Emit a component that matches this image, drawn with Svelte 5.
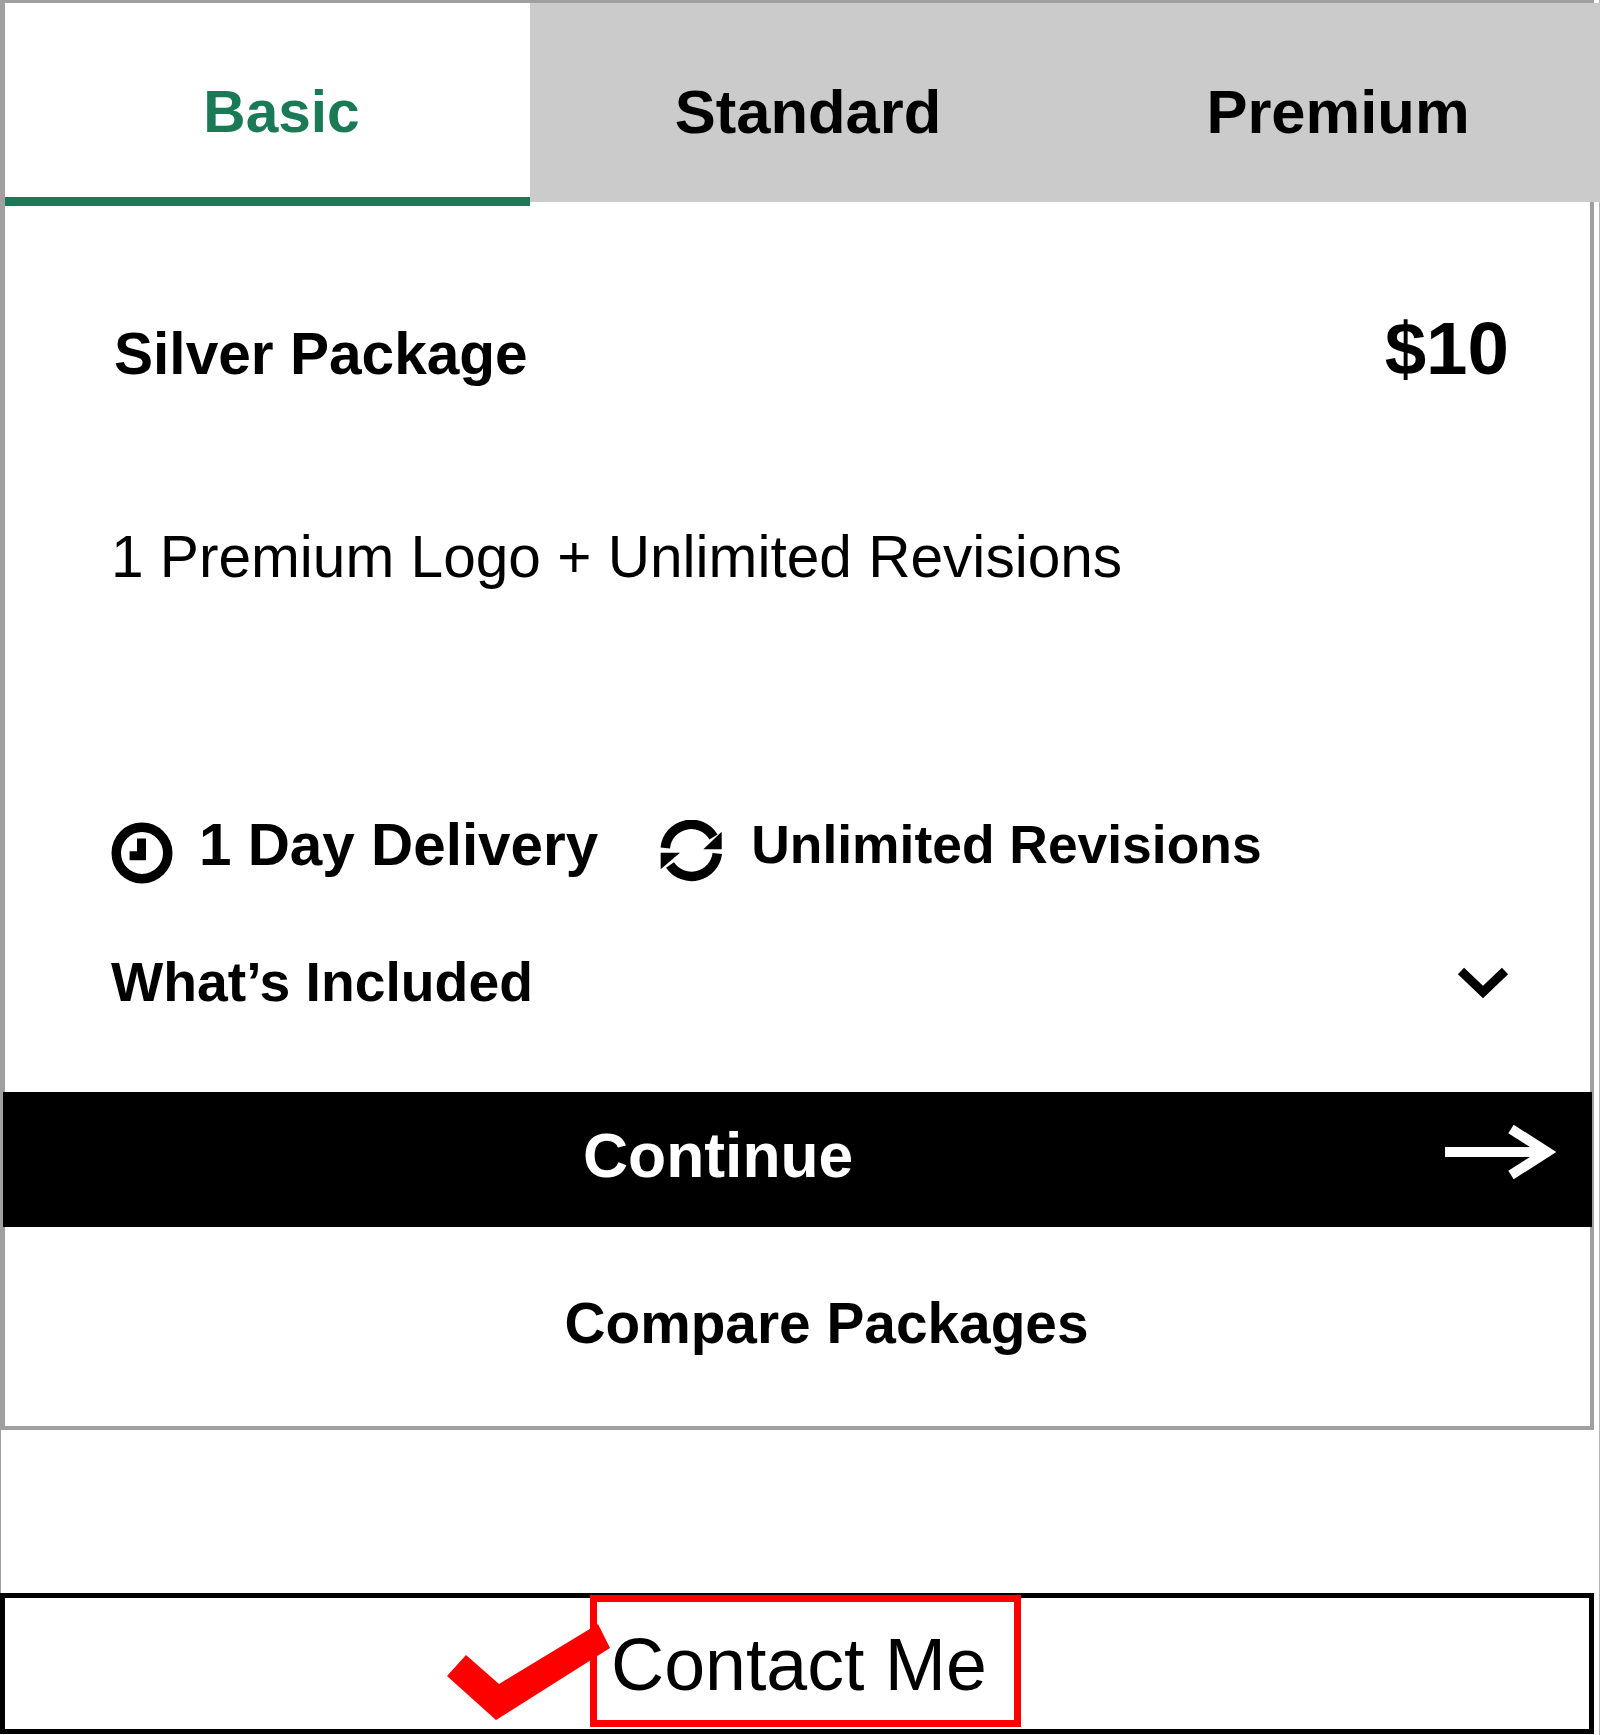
<script lang="ts">
  const tabs = ["Basic", "Standard", "Premium"];
  let activeTab = $state("Basic");
</script>

<main class="page">
  <section class="card">
    <div class="tabs">
      {#each tabs as tab}
        <button class="tab" class:active={activeTab === tab} onclick={() => (activeTab = tab)}>{tab}</button>
      {/each}
    </div>

    <div class="body">
      <div class="title-row">
        <h2>Silver Package</h2>
        <span class="price">$10</span>
      </div>
      <p class="desc">1 Premium Logo + Unlimited Revisions</p>

      <div class="meta">
        <span class="meta-item delivery">
          <svg viewBox="0 0 62 62" width="62" height="62">
            <circle cx="31" cy="31" r="25.75" fill="none" stroke="#000" stroke-width="9.5" />
            <path d="M26 16.6h9v21.7H18.6v-9H26z" fill="#000" />
          </svg>
          1 Day Delivery
        </span>
        <span class="meta-item revisions">
          <svg viewBox="0 0 63 62" width="63" height="62">
            <path d="M5.3 28A26 26 0 0 1 53.5 17" fill="none" stroke="#000" stroke-width="9.5" />
            <path d="M61.7 11.7v17.6H43.3z" fill="#000" />
            <path d="M57.3 33.5A26 26 0 0 1 10 45" fill="none" stroke="#000" stroke-width="9.5" />
            <path d="M.7 49.3V32.7H20z" fill="#000" />
          </svg>
          Unlimited Revisions
        </span>
      </div>

      <div class="included">
        <span>What’s Included</span>
        <svg viewBox="0 0 52 36" width="52" height="36">
          <path d="M4 7l22 21L48 7" fill="none" stroke="#000" stroke-width="9" />
        </svg>
      </div>
    </div>

    <button class="continue">
      <span>Continue</span>
      <svg viewBox="-2 0 112 54" width="112" height="54">
        <path d="M-2 27h104M64 4l36 23-36 23" fill="none" stroke="#fff" stroke-width="10" />
      </svg>
    </button>

    <div class="compare">Compare Packages</div>
  </section>

  <div class="spacer"></div>

  <footer class="contact">
    <button class="contact-btn">
      <svg class="check" viewBox="0 0 163 96" width="163" height="96">
        <path d="M0 52L19 31L52 60L151 0L163 24L49 96z" fill="#f00" />
      </svg>
      Contact Me
    </button>
  </footer>
</main>

<style>
:global(body) {
  background: #fff;
  font-family: "Liberation Sans", Arial, sans-serif;
}

.page {
  width: 1600px;
  height: 1735px;
  box-sizing: border-box;
  border-right: 1px solid #b4b4b4;
  display: flex;
  flex-direction: column;
  color: #000;
}

button {
  font-family: inherit;
  color: inherit;
  border: none;
  background: none;
  padding: 0;
}

.card {
  width: 1594px;
  box-sizing: border-box;
  height: 1430px;
  border: solid #a0a0a0;
  border-width: 3px 4px 4px 5px;
  display: flex;
  flex-direction: column;
}

.tabs {
  display: grid;
  grid-template-columns: 525px 528px 532px;
  height: 199px;
  margin-right: -10px;
  background: #cbcbcb;
}

.tab {
  font-size: 61.5px;
  font-weight: 700;
  height: 199px;
  padding: 18px 0 0 28px;
  text-align: center;
}

.tab.active {
  background: #fff;
  color: #1a7a56;
  font-size: 58.6px;
  height: 203px;
  border-bottom: 9px solid #1a7a56;
  box-sizing: border-box;
  padding-top: 22px;
}

.body {
  flex: 1;
  display: flex;
  flex-direction: column;
  padding: 0 81px 0 106px;
}

.title-row {
  display: flex;
  justify-content: space-between;
  align-items: baseline;
  margin-top: 104px;
  padding-left: 3px;
}

h2 {
  margin: 0;
  font-size: 58.6px;
  font-weight: 700;
}

.price {
  font-size: 74.5px;
  font-weight: 700;
}

.desc {
  margin: 132px 0 0;
  font-size: 58.6px;
}

.meta {
  display: flex;
  margin-top: 214px;
  align-items: center;
}

.meta-item {
  display: flex;
  align-items: center;
  font-weight: 700;
  font-size: 58.4px;
}

.delivery svg {
  margin: 18px 26px 0 0;
}

.revisions {
  font-size: 53.4px;
  margin-left: 62px;
}

.revisions svg {
  margin: 14px 28px 0 0;
}

.included {
  display: flex;
  justify-content: space-between;
  align-items: center;
  font-size: 55.3px;
  font-weight: 700;
  margin-top: 66px;
}

.continue {
  height: 135px;
  margin: 0 -2px 0 -2px;
  background: #000;
  color: #fff;
  font-size: 62.4px;
  font-weight: 700;
  display: flex;
  align-items: center;
  justify-content: space-between;
  padding: 0 35px 9px 580px;
  flex-shrink: 0;
}

.continue svg {
  margin-bottom: 7px;
}

.compare {
  height: 199px;
  box-sizing: border-box;
  display: flex;
  align-items: center;
  justify-content: center;
  font-size: 56.8px;
  font-weight: 700;
  padding: 0 0 7px 58px;
}

.spacer {
  height: 163px;
  border-left: 1px solid #a0a0a0;
  box-sizing: border-box;
  flex-shrink: 0;
}

.contact {
  width: 1594px;
  height: 141px;
  box-sizing: border-box;
  border: 5px solid #000;
  display: flex;
  justify-content: center;
}

.contact-btn {
  position: relative;
  width: 431px;
  height: 132px;
  margin: -3px 0 0 17px;
  border: 7px solid #f00;
  box-sizing: border-box;
  font-size: 73.5px;
  padding: 7px 13px 0 0;
}

.check {
  position: absolute;
  left: -150px;
  top: 22px;
}
</style>
